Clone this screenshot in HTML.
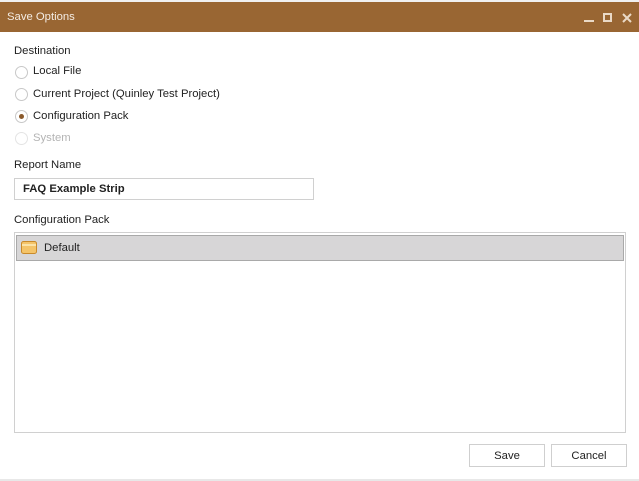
<!DOCTYPE html>
<html><head><style>
*{margin:0;padding:0;box-sizing:border-box}
body{width:639px;height:481px;background:#fff;font-family:"Segoe UI","Liberation Sans",sans-serif;font-size:11.3px;color:#222;position:relative;overflow:hidden}
.top{position:absolute;left:0;top:0;width:639px;height:2px;background:#f0f0f0}
.bar{position:absolute;left:0;top:2px;width:639px;height:30px;background:#996633;color:#fff}
.bar .t{position:absolute;left:7px;top:9px;font-size:11.3px;color:#f4ece4}
.a{position:absolute}
.r{position:absolute;left:15px;width:13px;height:13px;border:1px solid #c8c8c8;border-radius:50%;background:#fff}
.lbl{position:absolute;left:33px}
.btn{position:absolute;top:444px;width:76px;height:23px;border:1px solid #cfcfcf;background:#fff;text-align:center;line-height:23px}
</style></head><body>
<div class="top"></div>
<div class="bar"><span class="t">Save Options</span>
<div class="a" style="left:584px;top:18px;width:10px;height:2px;background:#ead9c6"></div>
<div class="a" style="left:603px;top:11px;width:9px;height:9px;border:2px solid #ead9c6"></div>
<svg class="a" style="left:622px;top:11px" width="10" height="10" viewBox="0 0 10 10"><path d="M1 1L9 9M9 1L1 9" stroke="#ead9c6" stroke-width="2"/></svg>
</div>
<div class="a" style="left:14px;top:45px">Destination</div>
<div class="r" style="top:66px"></div><div class="lbl" style="top:65px">Local File</div>
<div class="r" style="top:88px"></div><div class="lbl" style="top:88px">Current Project (Quinley Test Project)</div>
<div class="r" style="top:110px"><div style="position:absolute;left:3px;top:3px;width:5px;height:5px;border-radius:50%;background:#8a5a2c"></div></div><div class="lbl" style="top:110px">Configuration Pack</div>
<div class="r" style="top:132px;border-color:#e4e4e4"></div><div class="lbl" style="top:132px;color:#b4b4b4">System</div>
<div class="a" style="left:14px;top:159px">Report Name</div>
<div class="a" style="left:14px;top:178px;width:300px;height:22px;border:1px solid #d0d0d0;padding:4px 8px;font-weight:bold">FAQ Example Strip</div>
<div class="a" style="left:14px;top:214px">Configuration Pack</div>
<div class="a" style="left:14px;top:232px;width:612px;height:201px;border:1px solid #d0d0d0"></div>
<div class="a" style="left:16px;top:235px;width:608px;height:26px;background:#d7d6d7;border:1px solid #a9a9a9"></div>
<svg class="a" style="left:21px;top:240px" width="16" height="15" viewBox="0 0 16 15"><rect x="0.5" y="1.5" width="15" height="12" rx="2" fill="#f4c469" stroke="#c98a2a"/><path d="M1 5 H15" stroke="#fbe3a8" stroke-width="2"/></svg>
<div class="a" style="left:44px;top:242px">Default</div>
<div class="btn" style="left:469px">Save</div>
<div class="btn" style="left:551px">Cancel</div>
<div class="a" style="left:0;top:479px;width:639px;height:2px;background:#e8e8e8"></div>
</body></html>
